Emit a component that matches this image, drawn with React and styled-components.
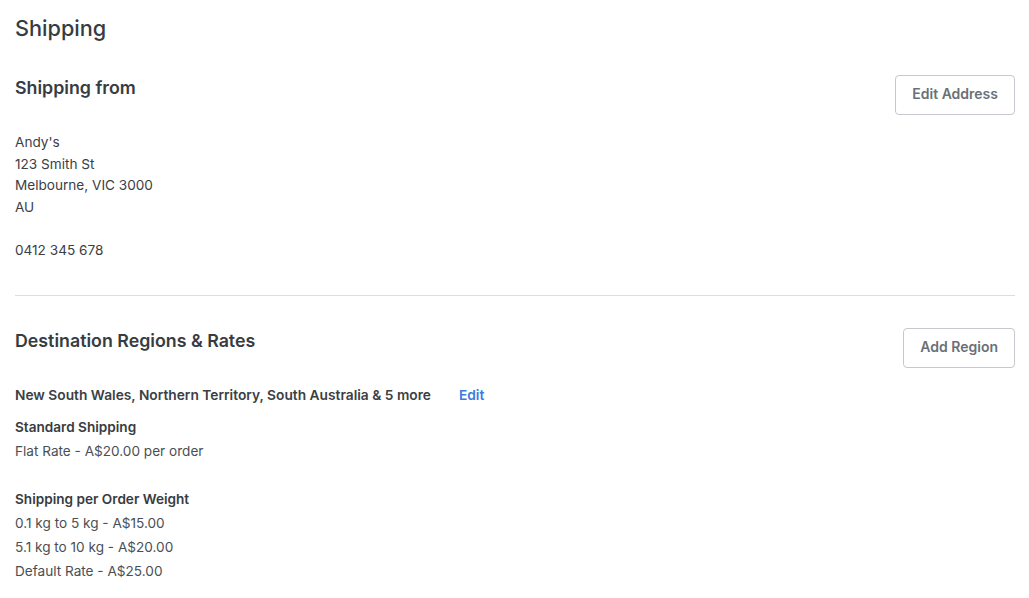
import React from "react";
import styled, { createGlobalStyle } from "styled-components";

const Global = createGlobalStyle`
  html, body { margin: 0; padding: 0; background: #fff; }
  body { font-family: Inter, "Noto Sans", "Liberation Sans", sans-serif; color: #3b4045; -webkit-font-smoothing: antialiased; }
`;

const Page = styled.div`
  padding: 14px 14px 20px 15px;
`;

const PageTitle = styled.h1`
  margin: 0;
  font-size: 21.7px;
  line-height: 28px;
  font-weight: 500;
  color: #373c41;
`;

const Section = styled.section`
  padding: ${(p) => p.$pad || "0"};
`;

const SectionHeader = styled.div`
  display: flex;
  justify-content: space-between;
  align-items: flex-start;
`;

const SectionTitle = styled.h2`
  margin: ${(p) => p.$mt || "0"} 0 0 0;
  font-size: 17.8px;
  line-height: 24px;
  font-weight: 600;
  color: #373c41;
`;

const Button = styled.button`
  height: 40px;
  padding: 0 16px 2px;
  border: 1px solid #c5c8cc;
  border-radius: 4px;
  background: #fff;
  font-family: inherit;
  font-size: 14px;
  line-height: 18px;
  font-weight: 600;
  color: #6a7077;
  cursor: pointer;
`;

const Address = styled.div`
  margin-top: 17px;
  font-size: 13.6px;
  line-height: 21.5px;
  color: #3b4045;
`;

const Line = styled.div`
  min-height: 21.5px;
`;

const Divider = styled.hr`
  border: 0;
  border-top: 1px solid #dcdee0;
  margin: 34px 0 0 0;
`;

const RegionRow = styled.div`
  display: flex;
  align-items: center;
  gap: 28px;
  margin-top: 15px;
  font-size: 13.75px;
  line-height: 24px;
  font-weight: 600;
`;

const EditLink = styled.a`
  color: #3a7be0;
  font-weight: 600;
  text-decoration: none;
  cursor: pointer;
`;

const RateBlock = styled.div`
  margin-top: ${(p) => p.$mt || "8px"};
  font-size: 13.6px;
  line-height: 24px;
`;

const RateTitle = styled.div`
  font-weight: 600;
  color: #373c41;
`;

const RateLine = styled.div`
  color: #4a4f55;
`;

export default function App() {
  return (
    <>
      <Global />
      <Page>
        <PageTitle>Shipping</PageTitle>
        <Section $pad="33px 0 0 0">
          <SectionHeader>
            <SectionTitle $mt="1px">Shipping from</SectionTitle>
            <Button>Edit Address</Button>
          </SectionHeader>
          <Address>
            <Line>Andy's</Line>
            <Line>123 Smith St</Line>
            <Line>Melbourne, VIC 3000</Line>
            <Line>AU</Line>
            <Line />
            <Line>0412 345 678</Line>
          </Address>
          <Divider />
        </Section>
        <Section $pad="32px 0 0 0">
          <SectionHeader>
            <SectionTitle $mt="1px">Destination Regions &amp; Rates</SectionTitle>
            <Button>Add Region</Button>
          </SectionHeader>
          <RegionRow>
            <span>New South Wales, Northern Territory, South Australia &amp; 5 more</span>
            <EditLink>Edit</EditLink>
          </RegionRow>
          <RateBlock>
            <RateTitle>Standard Shipping</RateTitle>
            <RateLine>Flat Rate - A$20.00 per order</RateLine>
          </RateBlock>
          <RateBlock $mt="24px">
            <RateTitle>Shipping per Order Weight</RateTitle>
            <RateLine>0.1 kg to 5 kg - A$15.00</RateLine>
            <RateLine>5.1 kg to 10 kg - A$20.00</RateLine>
            <RateLine>Default Rate - A$25.00</RateLine>
          </RateBlock>
        </Section>
      </Page>
    </>
  );
}
